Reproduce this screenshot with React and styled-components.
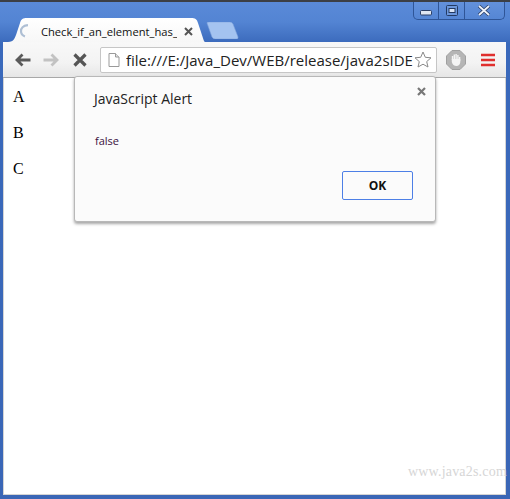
import React from "react";
import styled, { createGlobalStyle } from "styled-components";

const GlobalStyle = createGlobalStyle`
  html, body {
    margin: 0;
    padding: 0;
    background: #ffffff;
  }
`;

const Frame = styled.div`
  position: relative;
  width: 510px;
  height: 499px;
  box-sizing: border-box;
  display: flex;
  flex-direction: column;
  overflow: hidden;
  padding: 0 4px 4px 3px;
  background: linear-gradient(180deg, #5a8ad8 0, #5384d3 20px, #3a69bb 42px, #3a66b6 100%);
  border-top: 2px solid #3c3f45;
  font-family: "Open Sans", "Liberation Sans", sans-serif;
`;

const TitleBar = styled.div`
  height: 40px;
  flex: none;
  display: flex;
  align-items: flex-end;
  justify-content: space-between;
`;

const TabStrip = styled.div`
  display: flex;
  align-items: flex-end;
  padding-left: 5px;
`;

const Tab = styled.div`
  width: 197px;
  height: 24px;
  box-sizing: border-box;
  display: flex;
  align-items: center;
  padding: 2px 12px 0 10px;
  background: linear-gradient(180deg, #ffffff 0, #f7f7f7 100%);
  clip-path: path("M0 24 C6 24 7 20 9 14 L12 5 C13 1 15 0 19 0 L183 0 C187 0 189 1 190 5 L193 14 C195 20 196 24 197 24 Z");
`;

const TabTitle = styled.span`
  width: 137px;
  margin-left: 9px;
  overflow: hidden;
  white-space: nowrap;
  font-size: 11.2px;
  color: #111;
`;

const TabClose = styled.svg`
  margin-left: 7px;
  flex: none;
`;

const NewTab = styled.svg`
  margin: 0 0 3px 1px;
  flex: none;
`;

const Caption = styled.div`
  align-self: flex-start;
  display: flex;
  height: 18px;
  width: 92px;
  margin-right: 1px;
  box-sizing: border-box;
  border: 1px solid #2f5597;
  border-top: none;
  border-radius: 0 0 5px 5px;
  background: linear-gradient(180deg, #6391dc 0, #5586d4 100%);
`;

const CaptionButton = styled.div`
  width: ${(p) => p.$width}px;
  display: flex;
  align-items: center;
  justify-content: center;
  & + & {
    border-left: 1px solid #2f5597;
  }
`;

const MinimizeGlyph = styled.svg`
  margin-top: 5px;
`;

const Toolbar = styled.div`
  height: 36px;
  flex: none;
  display: flex;
  align-items: center;
  padding-left: 12px;
  background: linear-gradient(180deg, #f8f8f8 0, #f3f3f3 60%, #e6e6e6 100%);
  border-bottom: 1px solid #a8a8a8;
  box-sizing: border-box;
`;

const NavIcon = styled.svg`
  flex: none;
  margin-left: ${(p) => p.$before || 0}px;
  margin-right: ${(p) => p.$gap}px;
`;

const Omnibox = styled.div`
  width: 337px;
  height: 26px;
  margin-left: 2px;
  box-sizing: border-box;
  display: flex;
  align-items: center;
  padding: 0 3px 0 7px;
  background: #fff;
  border: 1px solid #c6c6c6;
  border-radius: 2px;
`;

const Url = styled.span`
  width: 288px;
  margin-left: 6px;
  overflow: hidden;
  white-space: nowrap;
  font-size: 15px;
  color: #222;
`;

const Page = styled.main`
  flex: 1;
  padding: 9px 0 0 9px;
  background: #fff;
  border: 1px solid #d4d4d4;
  border-top: none;
  font-family: "Liberation Serif", serif;
  font-size: 16px;
  color: #000;
`;

const Line = styled.p`
  margin: 0 0 16px;
  line-height: 20px;
`;

const Dialog = styled.div`
  position: absolute;
  left: 74px;
  top: 74px;
  width: 362px;
  height: 146px;
  box-sizing: border-box;
  padding: 12px 22px 0 19px;
  display: flex;
  flex-direction: column;
  background: #fbfbfb;
  border: 1px solid #b8b8b8;
  border-radius: 3px;
  box-shadow: 0 2px 3px rgba(0, 0, 0, 0.35);
`;

const DialogTitle = styled.div`
  font-size: 14px;
  line-height: 19px;
  color: #222;
`;

const DialogText = styled.div`
  margin-top: 25px;
  margin-left: 1px;
  font-size: 11px;
  line-height: 15px;
  color: #3a1040;
`;

const DialogClose = styled.svg`
  position: absolute;
  right: 9px;
  top: 10px;
`;

const OkButton = styled.button`
  align-self: flex-end;
  margin-top: 23px;
  width: 71px;
  height: 29px;
  padding: 0;
  background: #fbfbfb;
  border: 1px solid #4d7fe6;
  border-radius: 2px;
  font-family: "Open Sans", "Liberation Sans", sans-serif;
  font-size: 12px;
  font-weight: 700;
  color: #111;
`;

const Watermark = styled.div`
  position: absolute;
  right: 3px;
  bottom: 19px;
  font-family: "Liberation Serif", serif;
  font-size: 14px;
  letter-spacing: 0.2px;
  color: #d6d6d6;
`;

export default function App() {
  return (
    <Frame>
      <GlobalStyle />
      <TitleBar>
        <TabStrip>
          <Tab>
            <svg width="14" height="14" viewBox="0 0 14 14">
              <path d="M10 1 C5 1.5 3 4.5 3 7 C3 9.5 4.5 11.5 7 12.5" fill="none" stroke="#aebfd4" strokeWidth="2.2" />
            </svg>
            <TabTitle>Check_if_an_element_has_</TabTitle>
            <TabClose width="9" height="9" viewBox="0 0 9 9">
              <path d="M1 1 L8 8 M8 1 L1 8" stroke="#555" strokeWidth="2" />
            </TabClose>
          </Tab>
          <NewTab width="33" height="17" viewBox="0 0 33 17">
            <path d="M1 1 Q0.5 0 3 0 L24 0 Q26 0 27 2 L32 15 Q32.5 17 30 17 L9 17 Q7 17 6 15 Z" fill="#a4c3f0" stroke="#7fa3dc" strokeWidth="0.6" />
          </NewTab>
        </TabStrip>
        <Caption>
          <CaptionButton $width={25}>
            <MinimizeGlyph width="12" height="6" viewBox="0 0 12 6">
              <rect x="0.5" y="0.5" width="11" height="4.5" rx="1" fill="#dfe6f2" stroke="#2b3f66" />
            </MinimizeGlyph>
          </CaptionButton>
          <CaptionButton $width={25}>
            <svg width="12" height="11" viewBox="0 0 12 11">
              <rect x="0.5" y="0.5" width="11" height="10" rx="1" fill="#6c97dc" stroke="#233a63" />
              <rect x="3" y="3.5" width="6" height="4" fill="#dce6f6" stroke="#233a63" />
            </svg>
          </CaptionButton>
          <CaptionButton $width={40}>
            <svg width="14" height="11" viewBox="0 0 14 11">
              <path d="M2 1 L12 10 M12 1 L2 10" stroke="#2b3f66" strokeWidth="3.4" />
              <path d="M2 1 L12 10 M12 1 L2 10" stroke="#eef3fb" strokeWidth="1.8" />
            </svg>
          </CaptionButton>
        </Caption>
      </TitleBar>
      <Toolbar>
        <NavIcon $gap={12} width="16" height="14" viewBox="0 0 16 14">
          <path d="M7.5 1.5 L2 7 L7.5 12.5 M2.5 7 L15.5 7" fill="none" stroke="#5a5a5a" strokeWidth="2.8" />
        </NavIcon>
        <NavIcon $gap={14} width="16" height="14" viewBox="0 0 16 14">
          <path d="M8.5 1.5 L14 7 L8.5 12.5 M13.5 7 L0.5 7" fill="none" stroke="#c2c2c2" strokeWidth="2.8" />
        </NavIcon>
        <NavIcon $gap={11} width="14" height="14" viewBox="0 0 14 14">
          <path d="M1.5 1.5 L12.5 12.5 M12.5 1.5 L1.5 12.5" stroke="#555" strokeWidth="3.2" />
        </NavIcon>
        <Omnibox>
          <svg width="12" height="14" viewBox="0 0 12 14">
            <path d="M1 0.5 H7.5 L11 4 V13.5 H1 Z" fill="#fff" stroke="#9a9a9a" />
            <path d="M7.5 0.5 V4 H11" fill="#e4e4e4" stroke="#9a9a9a" />
          </svg>
          <Url>file:///E:/Java_Dev/WEB/release/java2sIDE</Url>
          <svg width="18" height="17" viewBox="0 0 18 17">
            <path d="M9 1 L11.3 6.3 L17 6.8 L12.7 10.6 L14 16 L9 13.2 L4 16 L5.3 10.6 L1 6.8 L6.7 6.3 Z" fill="#fff" stroke="#8a8a8a" />
          </svg>
        </Omnibox>
        <NavIcon $before={9} $gap={15} width="20" height="20" viewBox="0 0 20 20">
          <path d="M6 0.5 H14 L19.5 6 V14 L14 19.5 H6 L0.5 14 V6 Z" fill="#b5b5b5" stroke="#a0a0a0" />
          <path d="M6.5 10 V6 M8.3 9 V4.5 M10.1 9 V4 M11.9 9 V5 M13.6 11 V7" fill="none" stroke="#f4f4f4" strokeWidth="1.4" />
          <path d="M5.8 9 H14.3 V12 C14 14.5 12.5 16 10.5 16 C8 16 6.5 14.5 5.8 12 Z" fill="#f4f4f4" />
        </NavIcon>
        <NavIcon $gap={0} width="14" height="14" viewBox="0 0 14 14">
          <path d="M0 2 H14 M0 7 H14 M0 12 H14" stroke="#e0302e" strokeWidth="2.6" />
        </NavIcon>
      </Toolbar>
      <Page>
        <Line>A</Line>
        <Line>B</Line>
        <Line>C</Line>
      </Page>
      <Dialog>
        <DialogTitle>JavaScript Alert</DialogTitle>
        <DialogClose width="9" height="9" viewBox="0 0 9 9">
          <path d="M1 1 L8 8 M8 1 L1 8" stroke="#777" strokeWidth="2.2" />
        </DialogClose>
        <DialogText>false</DialogText>
        <OkButton>OK</OkButton>
      </Dialog>
      <Watermark>www.java2s.com</Watermark>
    </Frame>
  );
}
